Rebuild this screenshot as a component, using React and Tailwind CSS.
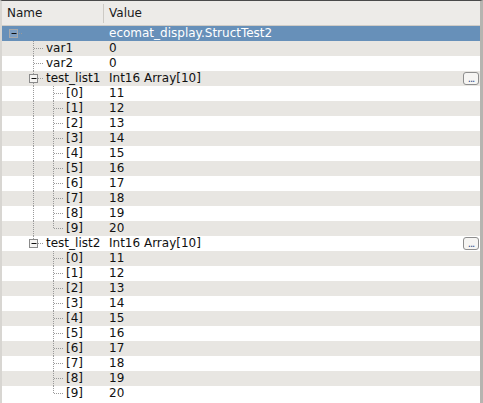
import React from 'react'

// tree rows: level, name, value, expander, last sibling flags
const rows = [
  { level: 0, name: '', value: 'ecomat_display.StructTest2', box: true },
  { level: 1, name: 'var1', value: '0' },
  { level: 1, name: 'var2', value: '0' },
  { level: 1, name: 'test_list1', value: 'Int16 Array[10]', box: true, more: true },
  ...Array.from({ length: 10 }, (_, i) => ({ level: 2, name: `[${i}]`, value: String(11 + i), parentLast: false, last: i === 9 })),
  { level: 1, name: 'test_list2', value: 'Int16 Array[10]', box: true, more: true, last: true },
  ...Array.from({ length: 10 }, (_, i) => ({ level: 2, name: `[${i}]`, value: String(11 + i), parentLast: true, last: i === 9 })),
]

function Dot(props) {
  return <line stroke="#9a9a9a" strokeWidth="1" strokeDasharray="1 1" {...props} />
}

function Guides({ row }) {
  const parts = []
  if (row.level === 0) {
    parts.push(<Dot key="h" x1="17" y1="7.5" x2="21" y2="7.5" />)
  }
  if (row.level === 1) {
    parts.push(<Dot key="v" x1="31.5" y1="0" x2="31.5" y2={row.last ? 8 : 15} />)
    parts.push(<Dot key="h" x1={row.box ? 36 : 32} y1="7.5" x2="42" y2="7.5" />)
  }
  if (row.level === 2) {
    if (!row.parentLast) parts.push(<Dot key="p" x1="31.5" y1="0" x2="31.5" y2="15" />)
    parts.push(<Dot key="v" x1="51.5" y1="0" x2="51.5" y2={row.last ? 8 : 15} />)
    parts.push(<Dot key="h" x1="52" y1="7.5" x2="62" y2="7.5" />)
  }
  if (row.box) {
    const bx = row.level === 0 ? 7.5 : 27.5
    parts.push(
      <g key="b">
        <rect x={bx} y="3.5" width="8" height="8" fill={row.level === 0 ? '#7fa0c3' : '#f5f4f2'} stroke={row.level === 0 ? '#a7a9ab' : '#8a8a8a'} />
        <line x1={bx + 2} y1="7.5" x2={bx + 7} y2="7.5" stroke="#111" />
      </g>
    )
  }
  return (
    <svg width="101" height="15" className="absolute left-0 top-0">
      {parts}
    </svg>
  )
}

function Row({ row, index }) {
  const selected = index === 0
  const bg = selected ? 'bg-[#6790b9] text-white' : index % 2 ? 'bg-[#e8e6e2]' : 'bg-white'
  const pad = row.level === 1 ? 'pl-[44px]' : row.level === 2 ? 'pl-[64px]' : ''
  return (
    <div className={`flex h-[15px] items-center text-[12px] leading-[15px] ${bg}`}>
      <div className={`relative h-full w-[101px] shrink-0 ${pad}`}>
        <Guides row={row} />
        <span className="relative">{row.name}</span>
      </div>
      <div className="flex flex-1 items-center justify-between pl-[6px] pr-[1px]">
        <span>{row.value}</span>
        {row.more && (
          <button className="flex h-[13px] w-[16px] items-end justify-center rounded-[3px] border border-[#8e8e8e] bg-[#f6f5f3] pb-px text-[10px] leading-[8px] tracking-[-1px] text-[#2a4a8a]">
            ...
          </button>
        )}
      </div>
    </div>
  )
}

export default function App() {
  return (
    <div className="h-[403px] w-[483px] overflow-hidden bg-white font-['DejaVu_Sans',Verdana,sans-serif]">
      <div className="flex h-full flex-col border-t border-l-2 border-r-[3px] border-t-[#4a4a4a] border-l-[#d8d6d2] border-r-[#b6b4b0]">
        <div className="flex h-[25px] shrink-0 items-center border-b border-b-[#cfccc7] bg-[#edebe8] text-[12px] text-[#1a1a1a]">
          <div className="w-[101px] shrink-0 pl-[5px]">Name</div>
          <div className="h-[19px] w-px bg-[#cdcac5]" />
          <div className="pl-[5px]">Value</div>
        </div>
        <div className="flex-1 text-[#111]">
          {rows.map((row, i) => (
            <Row key={i} row={row} index={i} />
          ))}
        </div>
      </div>
    </div>
  )
}
